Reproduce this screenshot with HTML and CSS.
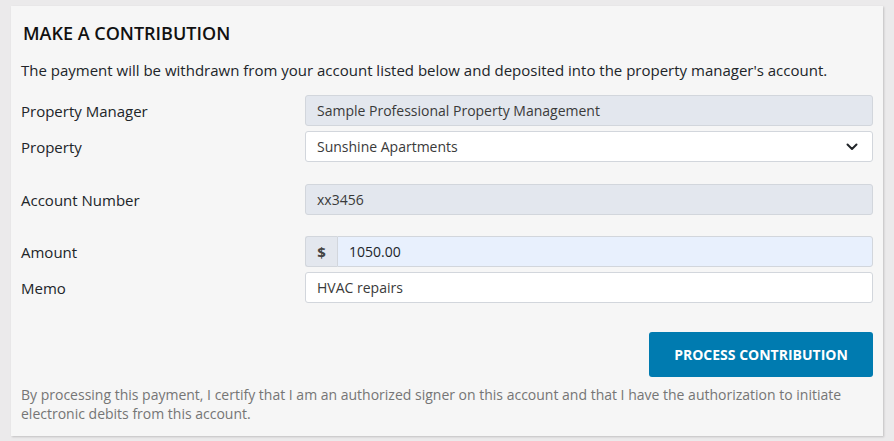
FILE: index.html
```html
<!DOCTYPE html>
<html lang="en">
<head>
<meta charset="utf-8">
<title>Make a Contribution</title>
<link rel="stylesheet" href="styles.css">
</head>
<body>
<div class="panel">
  <h2 class="title">MAKE A CONTRIBUTION</h2>
  <p class="intro">The payment will be withdrawn from your account listed below and deposited into the property manager's account.</p>
  <div class="row">
    <label class="label">Property Manager</label>
    <div class="field readonly">Sample Professional Property Management</div>
  </div>
  <div class="row row-tight">
    <label class="label">Property</label>
    <div class="field select">
      <span>Sunshine Apartments</span>
      <svg class="chev" width="12" height="8" viewBox="0 0 12 8"><path d="M1.5 1.5 L6 6 L10.5 1.5" fill="none" stroke="#212529" stroke-width="2" stroke-linecap="round" stroke-linejoin="round"/></svg>
    </div>
  </div>
  <div class="row row-gap">
    <label class="label">Account Number</label>
    <div class="field readonly">xx3456</div>
  </div>
  <div class="row row-gap2">
    <label class="label">Amount</label>
    <div class="group">
      <span class="addon">$</span>
      <div class="field amount">1050.00</div>
    </div>
  </div>
  <div class="row row-tight">
    <label class="label">Memo</label>
    <div class="field">HVAC repairs</div>
  </div>
  <div class="actions">
    <button class="btn">PROCESS CONTRIBUTION</button>
  </div>
  <p class="note">By processing this payment, I certify that I am an authorized signer on this account and that I have the authorization to initiate electronic debits from this account.</p>
</div>
</body>
</html>
```

FILE: styles.css
```css
html, body {
  margin: 0;
  padding: 0;
  background: #ebeaeb;
}
body {
  padding: 6px 11px 6px 11px;
  font-family: "Open Sans", "Liberation Sans", sans-serif;
  font-size: 15px;
  color: #212529;
}
.panel {
  background: #f6f6f6;
  box-shadow: 1px 1px 2px rgba(0,0,0,0.18);
  padding: 14px 10px 13px 10px;
  width: 852px;
}
.title {
  margin: 0 0 0 2px;
  font-size: 18px;
  font-weight: 600;
  line-height: 26px;
  color: #111;
}
.intro {
  margin: 14px 0 0 0;
  line-height: 20px;
}
.row {
  display: flex;
  align-items: center;
  margin-top: 15px;
}
.row-tight { margin-top: 5px; }
.row-gap { margin-top: 22px; }
.row-gap2 { margin-top: 21px; }
.label {
  width: 284px;
  flex: none;
}
.field {
  flex: 1;
  height: 31px;
  box-sizing: border-box;
  border: 1px solid #d2d6dc;
  border-radius: 3px;
  background: #fff;
  padding: 0 11px;
  display: flex;
  align-items: center;
  font-size: 14px;
  color: #3a3a3a;
}
.readonly { background: #e3e7ee; }
.select { justify-content: space-between; padding-right: 14px; }
.group {
  flex: 1;
  display: flex;
  height: 31px;
}
.addon {
  width: 32px;
  box-sizing: border-box;
  border: 1px solid #d2d6dc;
  border-right: none;
  border-radius: 3px 0 0 3px;
  background: #e3e7ee;
  display: flex;
  align-items: center;
  justify-content: center;
  font-weight: 700;
  color: #444;
}
.amount {
  background: #e8f0fd;
  border-radius: 0 3px 3px 0;
  color: #212529;
}
.actions {
  display: flex;
  justify-content: flex-end;
  margin-top: 29px;
}
.btn {
  width: 224px;
  height: 45px;
  border: none;
  border-radius: 3px;
  background: #007bb0;
  color: #fff;
  font-family: "Open Sans", "Liberation Sans", sans-serif;
  font-size: 14px;
  font-weight: 700;
}
.note {
  margin: 8px 0 0 0;
  font-size: 14px;
  color: #757575;
  line-height: 19px;
}
```
